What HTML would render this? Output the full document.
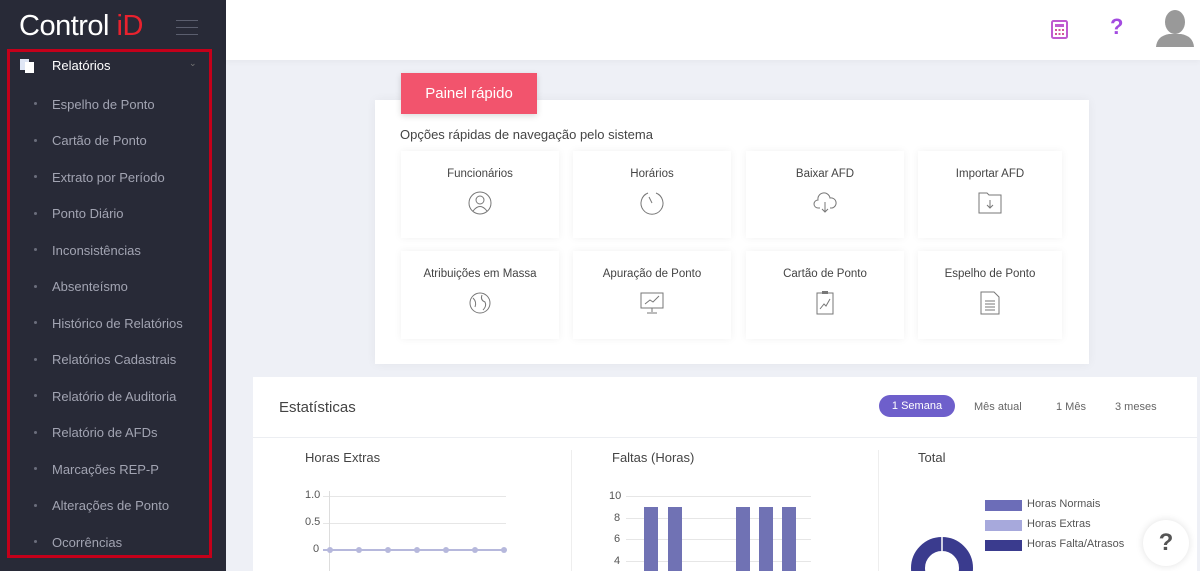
<!DOCTYPE html><html><head><meta charset="utf-8"><style>
*{margin:0;padding:0;box-sizing:border-box}
body{width:1200px;height:571px;overflow:hidden;font-family:"Liberation Sans",sans-serif;background:#eef0f6;position:relative}
.sb{position:absolute;left:0;top:0;width:226px;height:571px;background:#282a37}
.logo{position:absolute;left:19px;top:10px;font-size:29px;color:#fff;letter-spacing:-0.5px}
.logo b{color:#e8222e;font-weight:normal}
.ham{position:absolute;left:176px;top:20px;width:22px}
.ham i{display:block;height:1px;background:#5b5e6e;margin-bottom:6px}
.red{position:absolute;left:7px;top:49px;width:205px;height:509px;border:3px solid #c4001a}
.it{position:absolute;left:52px;font-size:13px;color:#a2a4b2}
.dot{position:absolute;left:34px;width:3px;height:3px;background:#6b6e7c;border-radius:50%}
.hd{position:absolute;left:226px;top:0;right:0;height:60px;background:#fff;box-shadow:0 2px 6px rgba(0,0,0,.04)}
.card{position:absolute;background:#fff}
.btn{position:absolute;left:401px;top:73px;width:136px;height:41px;background:#f2546d;color:#fff;font-size:15px;text-align:center;line-height:41px;box-shadow:0 2px 6px rgba(0,0,0,.15)}
.tile{position:absolute;background:#fff;box-shadow:0 0 8px rgba(0,0,0,.06);text-align:center;font-size:11.5px;color:#444;padding-top:17px}
.tile svg{display:block;margin:10px auto 0}
.tab{position:absolute;top:396px;font-size:11px;color:#666;line-height:22px}
.ax{position:absolute;font-size:11px;color:#555}
.bar{position:absolute;background:#7072b4;width:14px}
</style></head><body>
<div class="sb">
<div class="logo">Control <b>iD</b></div>
<div class="ham"><i></i><i></i><i></i></div>
<div class="red"></div>
<svg style="position:absolute;left:20px;top:58px" width="16" height="15"><rect x="0" y="1" width="9" height="11" fill="#dfe6f5"/><rect x="5" y="4" width="9" height="11" fill="#fff"/></svg>
<div class="it" style="top:58px;color:#fff">Relatórios</div>
<div style="position:absolute;left:189px;top:58px;color:#777;font-size:9px">⌄</div>
<div class="it" style="top:97px">Espelho de Ponto</div><div class="dot" style="top:102px"></div>
<div class="it" style="top:133px">Cartão de Ponto</div><div class="dot" style="top:139px"></div>
<div class="it" style="top:170px">Extrato por Período</div><div class="dot" style="top:175px"></div>
<div class="it" style="top:206px">Ponto Diário</div><div class="dot" style="top:212px"></div>
<div class="it" style="top:243px">Inconsistências</div><div class="dot" style="top:248px"></div>
<div class="it" style="top:279px">Absenteísmo</div><div class="dot" style="top:285px"></div>
<div class="it" style="top:316px">Histórico de Relatórios</div><div class="dot" style="top:321px"></div>
<div class="it" style="top:352px">Relatórios Cadastrais</div><div class="dot" style="top:358px"></div>
<div class="it" style="top:389px">Relatório de Auditoria</div><div class="dot" style="top:394px"></div>
<div class="it" style="top:425px">Relatório de AFDs</div><div class="dot" style="top:431px"></div>
<div class="it" style="top:462px">Marcações REP-P</div><div class="dot" style="top:467px"></div>
<div class="it" style="top:498px">Alterações de Ponto</div><div class="dot" style="top:504px"></div>
<div class="it" style="top:535px">Ocorrências</div><div class="dot" style="top:540px"></div>
</div>
<div class="hd">
<svg style="position:absolute;left:825px;top:20px" width="17" height="19"><rect x="1" y="1" width="15" height="17" rx="1.5" fill="none" stroke="#c05ad0" stroke-width="2"/><rect x="4" y="4" width="9" height="3" fill="#c05ad0"/><g fill="#d2569a"><rect x="4" y="9" width="2" height="2"/><rect x="7.5" y="9" width="2" height="2"/><rect x="11" y="9" width="2" height="2"/><rect x="4" y="13" width="2" height="2"/><rect x="7.5" y="13" width="2" height="2"/><rect x="11" y="13" width="2" height="2"/></g></svg>
<div style="position:absolute;left:884px;top:14px;font-size:22px;font-weight:bold;color:#a34be0">?</div>
<svg style="position:absolute;left:929px;top:9px" width="40" height="38"><ellipse cx="20" cy="13" rx="10" ry="12" fill="#999"/><path d="M1 38 Q2 27 14 25 L26 25 Q38 27 39 38Z" fill="#999"/></svg>
</div>
<div class="card" style="left:375px;top:100px;width:714px;height:264px;box-shadow:0 0 10px rgba(0,0,0,.05)"></div>
<div class="btn">Painel rápido</div>
<div style="position:absolute;left:400px;top:127px;font-size:13px;color:#444">Opções rápidas de navegação pelo sistema</div>
<div class="tile" style="left:401px;top:151px;width:158px;height:87px">Funcionários<svg width="26" height="26"><circle cx="13" cy="13" r="11" fill="none" stroke="#777"/><circle cx="13" cy="10" r="4" fill="none" stroke="#777"/><path d="M6 21 Q13 12 20 21" fill="none" stroke="#777"/></svg></div>
<div class="tile" style="left:573px;top:151px;width:158px;height:87px">Horários<svg width="26" height="26"><path d="M9 3 A11 11 0 1 0 17 3" fill="none" stroke="#777"/><path d="M10 7 L13 13" stroke="#777"/></svg></div>
<div class="tile" style="left:746px;top:151px;width:158px;height:87px">Baixar AFD<svg width="26" height="26"><path d="M8 18 H6 A4 4 0 0 1 6 10 A6 6 0 0 1 18 8 A5 5 0 0 1 20 18 H18" fill="none" stroke="#777"/><path d="M13 12 V22 M10 19 L13 22 L16 19" fill="none" stroke="#777"/></svg></div>
<div class="tile" style="left:918px;top:151px;width:144px;height:87px">Importar AFD<svg width="26" height="26"><path d="M2 3 H10 L12 5 H24 V23 H2Z" fill="none" stroke="#777"/><path d="M13 10 V18 M10 15 L13 18 L16 15" fill="none" stroke="#777"/></svg></div>
<div class="tile" style="left:401px;top:251px;width:158px;height:88px">Atribuições em Massa<svg width="26" height="26"><circle cx="13" cy="13" r="10" fill="none" stroke="#777"/><path d="M6 8 Q10 12 8 17 M15 5 Q13 10 18 12 Q20 16 16 20" fill="none" stroke="#777"/></svg></div>
<div class="tile" style="left:573px;top:251px;width:158px;height:88px">Apuração de Ponto<svg width="26" height="26"><rect x="2" y="3" width="22" height="15" fill="none" stroke="#777"/><path d="M6 14 L11 10 L14 12 L20 6 M13 18 V22 M8 23 H18" fill="none" stroke="#777"/></svg></div>
<div class="tile" style="left:746px;top:251px;width:158px;height:88px">Cartão de Ponto<svg width="26" height="26"><rect x="5" y="3" width="16" height="21" fill="none" stroke="#777"/><rect x="10" y="1" width="6" height="3" fill="#777"/><path d="M8 19 L12 14 L14 16 L18 9" fill="none" stroke="#777"/></svg></div>
<div class="tile" style="left:918px;top:251px;width:144px;height:88px">Espelho de Ponto<svg width="26" height="26"><path d="M4 2 H17 L22 7 V24 H4Z" fill="none" stroke="#777"/><path d="M8 11 H18 M8 14 H18 M8 17 H18 M8 20 H18" stroke="#777"/></svg></div>
<div class="card" style="left:253px;top:377px;width:944px;height:194px"></div>
<div style="position:absolute;left:253px;top:437px;width:944px;height:1px;background:#eceef2"></div>
<div style="position:absolute;left:279px;top:399px;font-size:15px;color:#444">Estatísticas</div>
<div class="tab" style="left:879px;width:76px;background:#6e5fcb;color:#fff;border-radius:12px;text-align:center;top:395px">1 Semana</div>
<div class="tab" style="left:974px">Mês atual</div><div class="tab" style="left:1056px">1 Mês</div><div class="tab" style="left:1115px">3 meses</div>
<div style="position:absolute;left:571px;top:450px;width:1px;height:121px;background:#eee"></div>
<div style="position:absolute;left:878px;top:450px;width:1px;height:121px;background:#eee"></div>
<div style="position:absolute;left:305px;top:450px;font-size:13px;color:#444">Horas Extras</div>
<div style="position:absolute;left:612px;top:450px;font-size:13px;color:#444">Faltas (Horas)</div>
<div style="position:absolute;left:918px;top:450px;font-size:13px;color:#444">Total</div>
<div class="ax" style="left:305px;top:489px">1.0</div><div class="ax" style="left:305px;top:516px">0.5</div><div class="ax" style="left:313px;top:543px">0</div>
<div style="position:absolute;left:323px;top:496px;width:183px;height:1px;background:#e6e6e6"></div>
<div style="position:absolute;left:323px;top:523px;width:183px;height:1px;background:#e6e6e6"></div>
<div style="position:absolute;left:323px;top:549px;width:183px;height:2px;background:#b6b8dc"></div>
<div style="position:absolute;left:329px;top:491px;width:1px;height:80px;background:#ddd"></div>
<svg style="position:absolute;left:320px;top:544px" width="200" height="12" fill="#b6b8dc"><circle cx="10" cy="6" r="3"/><circle cx="39" cy="6" r="3"/><circle cx="68" cy="6" r="3"/><circle cx="97" cy="6" r="3"/><circle cx="126" cy="6" r="3"/><circle cx="155" cy="6" r="3"/><circle cx="184" cy="6" r="3"/></svg>
<div class="ax" style="left:609px;top:490px">10</div><div class="ax" style="left:614px;top:512px">8</div><div class="ax" style="left:614px;top:533px">6</div><div class="ax" style="left:614px;top:555px">4</div>
<div style="position:absolute;left:626px;top:496px;width:185px;height:1px;background:#e6e6e6"></div>
<div style="position:absolute;left:626px;top:518px;width:185px;height:1px;background:#e6e6e6"></div>
<div style="position:absolute;left:626px;top:539px;width:185px;height:1px;background:#e6e6e6"></div>
<div style="position:absolute;left:626px;top:561px;width:185px;height:1px;background:#e6e6e6"></div>
<div class="bar" style="left:644px;top:507px;height:64px"></div><div class="bar" style="left:668px;top:507px;height:64px"></div>
<div class="bar" style="left:736px;top:507px;height:64px"></div><div class="bar" style="left:759px;top:507px;height:64px"></div><div class="bar" style="left:782px;top:507px;height:64px"></div>
<svg style="position:absolute;left:910px;top:528px" width="64" height="43"><circle cx="32" cy="40" r="24" fill="none" stroke="#3a3b8e" stroke-width="14"/><path d="M32 9 V23" stroke="#fff" stroke-width="1.5"/></svg>
<div style="position:absolute;left:985px;top:500px;width:37px;height:11px;background:#6c6db8"></div><div style="position:absolute;left:1027px;top:498px;font-size:11px;color:#555">Horas Normais</div>
<div style="position:absolute;left:985px;top:520px;width:37px;height:11px;background:#a7a9dc"></div><div style="position:absolute;left:1027px;top:518px;font-size:11px;color:#555">Horas Extras</div>
<div style="position:absolute;left:985px;top:540px;width:37px;height:11px;background:#3a3b8e"></div><div style="position:absolute;left:1027px;top:538px;font-size:11px;color:#555">Horas Falta/Atrasos</div>
<div style="position:absolute;left:1143px;top:520px;width:46px;height:46px;border-radius:50%;background:#fff;box-shadow:0 0 8px rgba(0,0,0,.12);text-align:center;line-height:46px;font-size:24px;font-weight:bold;color:#555">?</div>
</body></html>
